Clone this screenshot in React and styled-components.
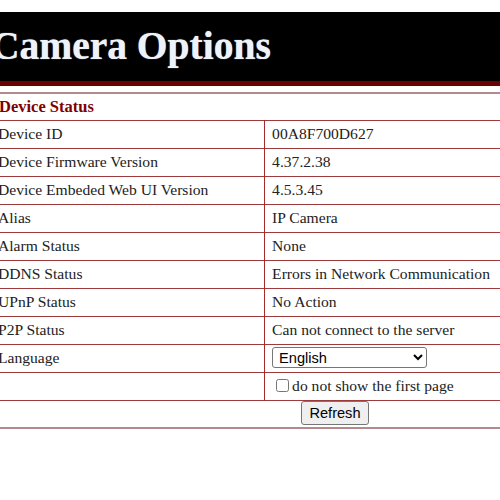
import styled, { createGlobalStyle } from 'styled-components';

const GlobalStyle = createGlobalStyle`
    html, body {
        margin: 0;
        background: #fff;
        overflow: hidden;
    }
`;

const Page = styled.div`
    width: 690px;
    margin-left: -10px;
    padding-top: 12px;
    font-family: "Liberation Serif", "Times New Roman", serif;
    color: #222;
`;

const Header = styled.div`
    display: flex;
    align-items: center;
    height: 69px;
    padding-left: 1px;
    background: #000;
    border-bottom: 5px solid #6e0000;
`;

const Title = styled.h1`
    margin: 0;
    font-size: 39.5px;
    line-height: 1;
    font-weight: bold;
    color: #eef3f9;
    text-shadow: 0 0 1px #c9d6e6;
`;

const StatusTable = styled.table`
    width: 100%;
    margin-top: 6px;
    border-collapse: collapse;
    border-top: 2px solid #b58a8c;
    border-bottom: 2px solid #b58a8c;
    font-size: 15.6px;
`;

const Row = styled.tr`
    border-bottom: 1px solid #9c3a3c;
    &:last-child {
        border-bottom: none;
    }
`;

const Cell = styled.td`
    height: 28px;
    box-sizing: border-box;
    padding: 0 8px 1px;
    line-height: 19px;
    text-align: ${p => (p.$center ? 'center' : 'left')};
    vertical-align: middle;
    white-space: nowrap;
    & + & {
        border-left: 1px solid #a52a2a;
        padding-left: 7px;
    }
`;

const SectionTitle = styled.td`
    height: 27px;
    box-sizing: border-box;
    padding: 0 9px 1px;
    line-height: 19px;
    font-size: 16.5px;
    font-weight: bold;
    color: #800000;
`;

const LangSelect = styled.select`
    display: block;
    width: 155px;
    height: 21px;
    font-family: "Liberation Sans", Arial, sans-serif;
    font-size: 14.6px;
    color: #000;
    background: #fff;
    border: 1px solid #767676;
    border-radius: 3px;
    padding: 0 2px;
`;

const CheckLabel = styled.label`
    display: inline-flex;
    align-items: center;
    gap: 3px;
`;

const Check = styled.input`
    width: 13px;
    height: 13px;
    margin: 0 0 0 4px;
`;

const RefreshButton = styled.button`
    height: 24px;
    padding: 0 7px;
    vertical-align: middle;
    font-family: "Liberation Sans", Arial, sans-serif;
    font-size: 14.6px;
    color: #000;
    background: #efefef;
    border: 1px solid #767676;
    border-radius: 3px;
`;

const rows = [
    ['Device ID', '00A8F700D627'],
    ['Device Firmware Version', '4.37.2.38'],
    ['Device Embeded Web UI Version', '4.5.3.45'],
    ['Alias', 'IP Camera'],
    ['Alarm Status', 'None'],
    ['DDNS Status', 'Errors in Network Communication'],
    ['UPnP Status', 'No Action'],
    ['P2P Status', 'Can not connect to the server'],
];

export default function App() {
    return (
        <>
            <GlobalStyle />
            <Page>
                <Header>
                    <Title>Camera Options</Title>
                </Header>
                <StatusTable>
                    <colgroup>
                        <col style={{ width: '39.8%' }} />
                        <col />
                    </colgroup>
                    <tbody>
                        <Row>
                            <SectionTitle colSpan={2}>Device Status</SectionTitle>
                        </Row>
                        {rows.map(([label, value]) => (
                            <Row key={label}>
                                <Cell>{label}</Cell>
                                <Cell>{value}</Cell>
                            </Row>
                        ))}
                        <Row>
                            <Cell>Language</Cell>
                            <Cell>
                                <LangSelect defaultValue="en">
                                    <option value="en">English</option>
                                </LangSelect>
                            </Cell>
                        </Row>
                        <Row>
                            <Cell></Cell>
                            <Cell>
                                <CheckLabel>
                                    <Check type="checkbox" />
                                    do not show the first page
                                </CheckLabel>
                            </Cell>
                        </Row>
                        <Row>
                            <Cell colSpan={2} $center>
                                <RefreshButton>Refresh</RefreshButton>
                            </Cell>
                        </Row>
                    </tbody>
                </StatusTable>
            </Page>
        </>
    );
}
